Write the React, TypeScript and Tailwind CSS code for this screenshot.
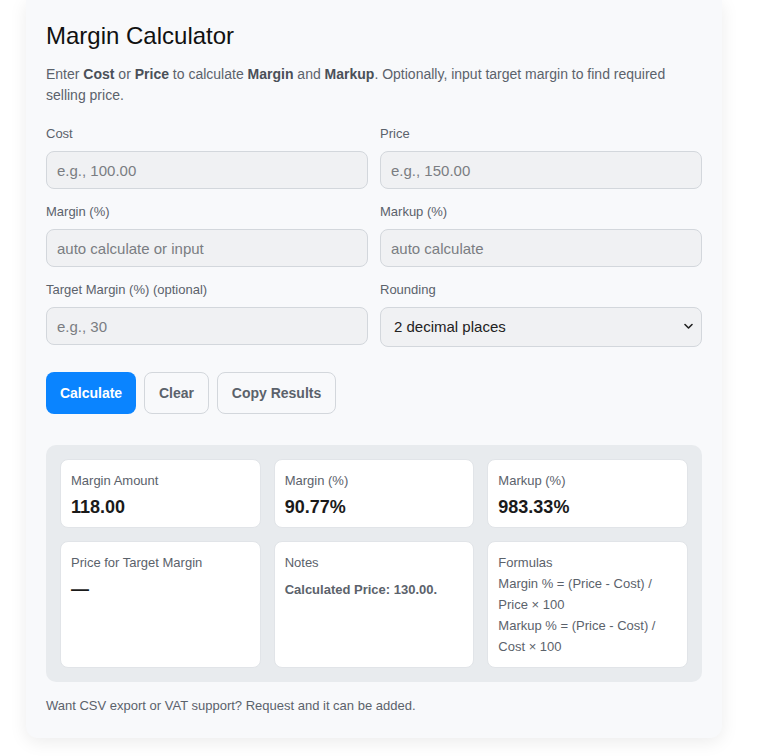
import { ReactNode } from 'react';

const font = { fontFamily: '"Liberation Sans", Arial, sans-serif' };

function Field({ label, children }: { label: string; children: ReactNode }) {
  return (
    <div className="flex flex-col">
      <label className="mb-2 text-[13px] leading-[18px] text-[#5b626b]">{label}</label>
      {children}
    </div>
  );
}

function TextInput({ placeholder }: { placeholder: string }) {
  return (
    <input
      type="text"
      placeholder={placeholder}
      className="h-[38px] w-full rounded-lg border border-[#d3d7dc] bg-[#f0f1f3] px-[10px] text-[15px] text-[#222] outline-none placeholder:text-[#7a7d82]"
    />
  );
}

function Stat({ label, children, tall }: { label: string; children: ReactNode; tall?: boolean }) {
  return (
    <div className={`rounded-lg border border-[#e1e4e8] bg-white px-[10px] pt-[12px] ${tall ? 'h-[127px]' : 'h-[69px]'}`}>
      <div className="text-[13px] leading-[18px] text-[#5b626b]">{label}</div>
      {children}
    </div>
  );
}

export default function App() {
  return (
    <div className="min-h-screen bg-white" style={font}>
      <div className="ml-[26px] w-[696px] rounded-b-xl bg-[#f8f9fb] px-5 pt-5 pb-[23px] shadow-[0_4px_18px_rgba(0,0,0,0.08)]">
        <h1 className="text-[24px] leading-8 text-[#111]">Margin Calculator</h1>
        <p className="mt-[12px] text-[14px] leading-[21px] text-[#5b626b]">
          Enter <b className="text-[#4a5058]">Cost</b> or <b className="text-[#4a5058]">Price</b> to calculate{' '}
          <b className="text-[#4a5058]">Margin</b> and <b className="text-[#4a5058]">Markup</b>. Optionally, input target
          margin to find required selling price.
        </p>

        <div className="mt-[19px] grid grid-cols-2 gap-x-3 gap-y-[14px]">
          <Field label="Cost">
            <TextInput placeholder="e.g., 100.00" />
          </Field>
          <Field label="Price">
            <TextInput placeholder="e.g., 150.00" />
          </Field>
          <Field label="Margin (%)">
            <TextInput placeholder="auto calculate or input" />
          </Field>
          <Field label="Markup (%)">
            <TextInput placeholder="auto calculate" />
          </Field>
          <Field label="Target Margin (%) (optional)">
            <TextInput placeholder="e.g., 30" />
          </Field>
          <Field label="Rounding">
            <div className="relative">
              <select
                defaultValue="2"
                className="h-[40px] w-full appearance-none rounded-lg border border-[#d3d7dc] bg-[#f0f1f3] px-[13px] text-[15px] text-[#222] outline-none"
              >
                <option value="0">No rounding</option>
                <option value="2">2 decimal places</option>
              </select>
              <svg
                className="pointer-events-none absolute right-[9px] top-[16px]"
                width="9"
                height="7"
                viewBox="0 0 9 7"
                fill="none"
              >
                <path d="M1 1.5L4.5 5L8 1.5" stroke="#222" strokeWidth="1.6" strokeLinecap="round" strokeLinejoin="round" />
              </svg>
            </div>
          </Field>
        </div>

        <div className="mt-[25px] flex gap-2">
          <button className="h-[42px] w-[90px] rounded-lg bg-[#0a84ff] text-[14px] font-bold text-white">Calculate</button>
          <button className="h-[42px] w-[65px] rounded-lg border border-[#d3d7dc] text-[14px] font-bold text-[#5b626b]">
            Clear
          </button>
          <button className="h-[42px] w-[119px] rounded-lg border border-[#d3d7dc] text-[14px] font-bold text-[#5b626b]">
            Copy Results
          </button>
        </div>

        <div className="mt-[31px] grid grid-cols-3 gap-[13px] rounded-[10px] bg-[#e8ebee] p-[14px]">
          <Stat label="Margin Amount">
            <div className="mt-[6px] text-[18px] font-bold leading-[22px] text-[#1a1a1a]">118.00</div>
          </Stat>
          <Stat label="Margin (%)">
            <div className="mt-[6px] text-[18px] font-bold leading-[22px] text-[#1a1a1a]">90.77%</div>
          </Stat>
          <Stat label="Markup (%)">
            <div className="mt-[6px] text-[18px] font-bold leading-[22px] text-[#1a1a1a]">983.33%</div>
          </Stat>
          <Stat label="Price for Target Margin" tall>
            <div className="mt-[6px] text-[18px] font-bold leading-[22px] text-[#1a1a1a]">—</div>
          </Stat>
          <Stat label="Notes" tall>
            <div className="mt-[9px] text-[13px] font-bold leading-[18px] text-[#5b626b]">Calculated Price: 130.00.</div>
          </Stat>
          <Stat label="Formulas" tall>
            <div className="pt-px text-[13px] leading-[21px] text-[#5b626b]">
              Margin % = (Price - Cost) / Price × 100
              <br />
              Markup % = (Price - Cost) / Cost × 100
            </div>
          </Stat>
        </div>

        <p className="mt-[15px] text-[13px] leading-[18px] text-[#5b626b]">
          Want CSV export or VAT support? Request and it can be added.
        </p>
      </div>
    </div>
  );
}
